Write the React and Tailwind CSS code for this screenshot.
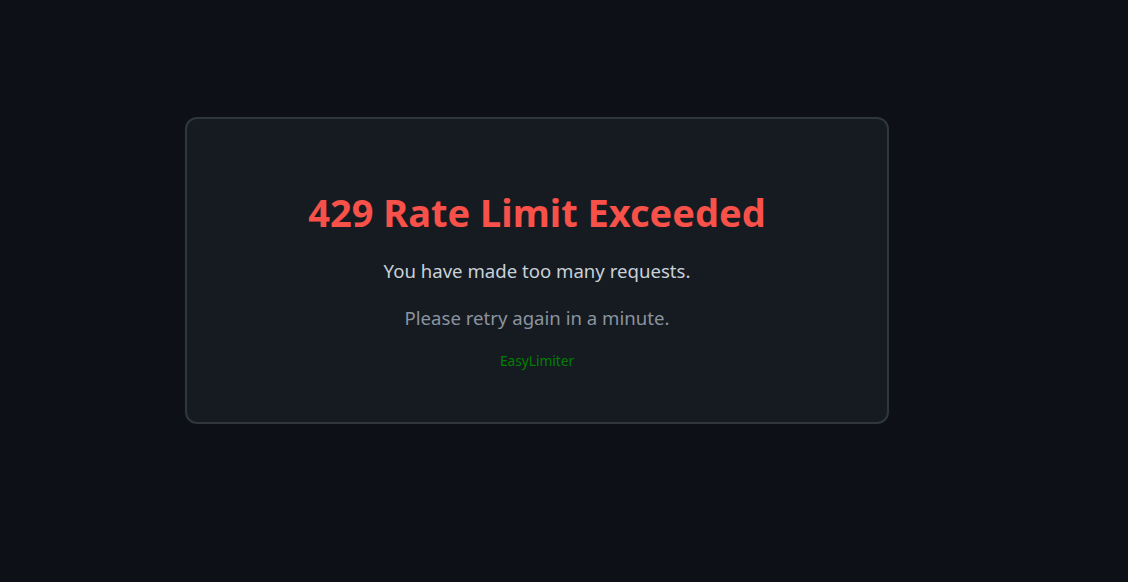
import React from "react";

const App = () => {
  return (
    <div className="min-h-[582px] w-full bg-[#0d1117] pt-[117px] font-['Segoe_UI','Noto_Sans',sans-serif]">
      <div className="ml-[185px] flex h-[307px] w-[704px] flex-col items-center rounded-xl border-2 border-[#30363d] bg-[#161b22] pt-[67px]">
        <h1 className="text-[38px] font-bold leading-[52px] text-[#f85149]">429 Rate Limit Exceeded</h1>
        <p className="mt-[20px] text-[18.6px] leading-[26px] text-[#c9d1d9]">You have made too many requests.</p>
        <p className="mt-[21px] text-[18.6px] leading-[26px] text-[#8b949e]">Please retry again in a minute.</p>
        <p className="mt-[20px] text-[13.7px] leading-[20px] text-[#008000]">EasyLimiter</p>
      </div>
    </div>
  );
};

export default App;
